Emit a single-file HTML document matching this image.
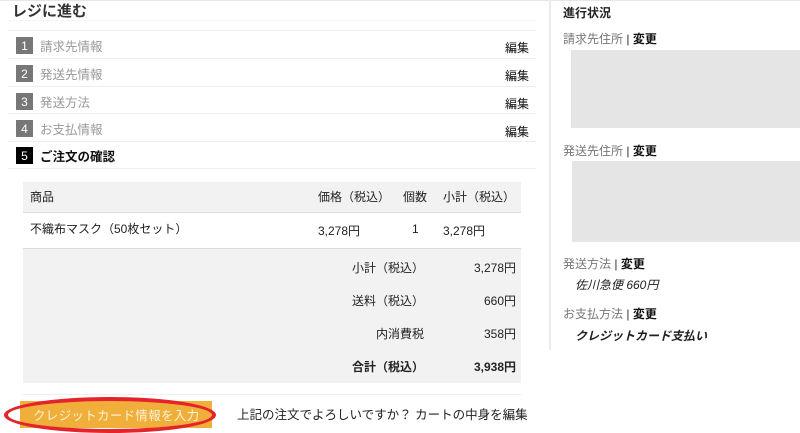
<!DOCTYPE html>
<html><head><meta charset="utf-8"><style>
body{margin:0;width:800px;height:433px;overflow:hidden;background:#fff;font-family:"Liberation Sans","Noto Sans CJK JP",sans-serif;font-size:12px;color:#222;position:relative}
.a{position:absolute;white-space:nowrap}
.hl{position:absolute;height:1px;background:#eee}
.num{position:absolute;left:16px;width:17px;height:17px;background:#777;color:#fff;font-size:12px;line-height:18px;text-align:center}
.st{position:absolute;left:40px;color:#999;font-size:12.5px}
.ed{position:absolute;right:271px;font-size:12px;color:#111}
.r{text-align:right}
</style></head><body>
<div style="position:absolute;left:0;top:0;width:800px;height:1px;background:#e8e6e0"></div>
<div class="a" style="left:12px;top:0px;font-size:15px;font-weight:bold;color:#333">レジに進む</div>
<div class="hl" style="left:8px;top:20px;width:528px;background:#f6f6f6"></div>
<div class="hl" style="left:8px;top:30px;width:528px"></div>
<div class="num" style="top:37px">1</div><div class="a st" style="top:36px">請求先情報</div><div class="a ed" style="top:39px">編集</div>
<div class="hl" style="left:8px;top:58px;width:528px"></div>
<div class="num" style="top:65px">2</div><div class="a st" style="top:64px">発送先情報</div><div class="a ed" style="top:67px">編集</div>
<div class="hl" style="left:8px;top:86px;width:528px"></div>
<div class="num" style="top:93px">3</div><div class="a st" style="top:92px">発送方法</div><div class="a ed" style="top:95px">編集</div>
<div class="hl" style="left:8px;top:113px;width:528px"></div>
<div class="num" style="top:120px">4</div><div class="a st" style="top:119px">お支払情報</div><div class="a ed" style="top:123px">編集</div>
<div class="hl" style="left:8px;top:141px;width:528px"></div>
<div class="num" style="top:147px;background:#000">5</div><div class="a st" style="top:146px;color:#111;font-weight:bold">ご注文の確認</div>
<div class="hl" style="left:8px;top:168px;width:528px"></div>

<div style="position:absolute;left:23px;top:182px;width:498px;height:30px;background:#f2f2f2;border-bottom:1px solid #ddd"></div>
<div class="a" style="left:30px;top:188px">商品</div>
<div class="a" style="left:318px;top:188px">価格（税込）</div>
<div class="a" style="left:403px;top:188px">個数</div>
<div class="a" style="left:443px;top:188px">小計（税込）</div>
<div class="a" style="left:30px;top:220px">不織布マスク（50枚セット）</div>
<div class="a" style="left:318px;top:222px">3,278円</div>
<div class="a" style="left:412px;top:222px">1</div>
<div class="a" style="left:443px;top:222px">3,278円</div>
<div style="position:absolute;left:23px;top:248px;width:498px;height:134px;background:#f2f2f2;border-top:1px solid #ddd"></div>
<div class="a r" style="right:376px;top:259px">小計（税込）</div><div class="a r" style="right:284px;top:259px">3,278円</div>
<div class="a r" style="right:376px;top:292px">送料（税込）</div><div class="a r" style="right:284px;top:292px">660円</div>
<div class="a r" style="right:376px;top:325px">内消費税</div><div class="a r" style="right:284px;top:325px">358円</div>
<div class="a r" style="right:376px;top:358px;font-weight:bold">合計（税込）</div><div class="a r" style="right:284px;top:358px;font-weight:bold">3,938円</div>
<div class="hl" style="left:23px;top:394px;width:498px"></div>
<div style="position:absolute;left:20px;top:401px;width:192px;height:27px;background:#f0ae3a"></div>
<div class="a" style="left:33px;top:405px;color:#fff3d6;font-size:12.5px;letter-spacing:0.3px">クレジットカード情報を入力</div>
<div style="position:absolute;left:4px;top:397px;width:204px;height:28px;border:4px solid #e4232a;border-radius:50%"></div>
<div class="a" style="left:237px;top:404px;font-size:12.5px">上記の注文でよろしいですか？ カートの中身を編集</div>

<div style="position:absolute;left:549px;top:0;width:2px;height:350px;background:#eaeaea"></div>
<div class="a" style="left:563px;top:4px;font-weight:bold">進行状況</div>
<div class="a" style="left:563px;top:30px;color:#777">請求先住所<span style="color:#333"> | </span><b style="color:#111">変更</b></div>
<div style="position:absolute;left:571px;top:50px;width:229px;height:78px;background:#e5e5e5"></div>
<div class="a" style="left:563px;top:142px;color:#777">発送先住所<span style="color:#333"> | </span><b style="color:#111">変更</b></div>
<div style="position:absolute;left:572px;top:161px;width:228px;height:81px;background:#e5e5e5"></div>
<div class="a" style="left:563px;top:255px;color:#777">発送方法<span style="color:#333"> | </span><b style="color:#111">変更</b></div>
<div class="a" style="left:575px;top:276px;font-style:italic">佐川急便 660円</div>
<div class="a" style="left:563px;top:305px;color:#777">お支払方法<span style="color:#333"> | </span><b style="color:#111">変更</b></div>
<div class="a" style="left:575px;top:327px;font-style:italic;font-weight:bold">クレジットカード支払い</div>
</body></html>
